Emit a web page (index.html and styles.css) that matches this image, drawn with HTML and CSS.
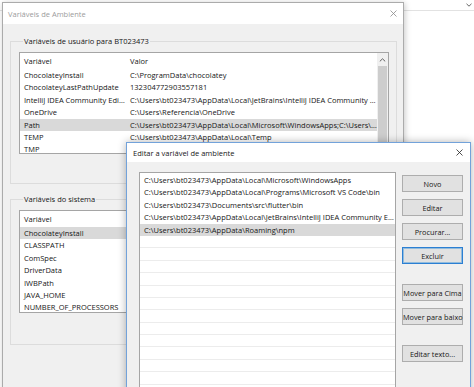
FILE: index.html
```html
<!DOCTYPE html>
<html lang="pt-BR">

<head>
    <meta charset="UTF-8">
    <title>Variáveis de Ambiente</title>
    <link rel="stylesheet" href="styles.css">
</head>

<body>
    <div class="desk-bar">
        <svg class="chev" width="6" height="4" viewBox="0 0 6 4"><path d="M0.5 0.8 L3 3.2 L5.5 0.8" fill="none" stroke="#555" stroke-width="0.9"/></svg>
    </div>

    <!-- janela de trás -->
    <div class="win win-back">
        <div class="titlebar">
            <span>Variáveis de Ambiente</span>
            <svg class="close" width="7" height="7" viewBox="0 0 7 7"><path d="M0.5 0.5 L6.5 6.5 M6.5 0.5 L0.5 6.5" stroke="#8a8a8a" stroke-width="0.8"/></svg>
        </div>

        <div class="group group-user">
            <div class="group-label">Variáveis de usuário para BT023473</div>
            <div class="listview">
                <div class="lv-main">
                    <div class="lv-row lv-head"><span>Variável</span><span>Valor</span></div>
                    <div class="lv-row"><span>ChocolateyInstall</span><span>C:\ProgramData\chocolatey</span></div>
                    <div class="lv-row"><span>ChocolateyLastPathUpdate</span><span>132304772903557181</span></div>
                    <div class="lv-row"><span>IntelliJ IDEA Community Edition</span><span>C:\Users\bt023473\AppData\Local\JetBrains\IntelliJ IDEA Community Edition 2020.1\bin;</span></div>
                    <div class="lv-row"><span>OneDrive</span><span>C:\Users\Referencia\OneDrive</span></div>
                    <div class="lv-row sel"><span>Path</span><span>C:\Users\bt023473\AppData\Local\Microsoft\WindowsApps;C:\Users\bt023473</span></div>
                    <div class="lv-row"><span>TEMP</span><span>C:\Users\bt023473\AppData\Local\Temp</span></div>
                    <div class="lv-row"><span>TMP</span><span>C:\Users\bt023473\AppData\Local\Temp</span></div>
                </div>
                <div class="scrollbar">
                    <div class="sb-arrow">
                        <svg width="7" height="4" viewBox="0 0 7 4"><path d="M0.8 3.4 L3.5 0.8 L6.2 3.4" fill="none" stroke="#606060" stroke-width="1"/></svg>
                    </div>
                    <div class="sb-thumb"></div>
                </div>
            </div>
        </div>

        <div class="group group-sys">
            <div class="group-label">Variáveis do sistema</div>
            <div class="listview">
                <div class="lv-main">
                    <div class="lv-row lv-head"><span>Variável</span><span>Valor</span></div>
                    <div class="lv-row sel"><span>ChocolateyInstall</span><span>C:\ProgramData\chocolatey</span></div>
                    <div class="lv-row"><span>CLASSPATH</span><span>.;</span></div>
                    <div class="lv-row"><span>ComSpec</span><span>C:\WINDOWS\system32\cmd.exe</span></div>
                    <div class="lv-row"><span>DriverData</span><span>C:\Windows\System32\Drivers\DriverData</span></div>
                    <div class="lv-row"><span>IWBPath</span><span>C:\Program Files\IWB</span></div>
                    <div class="lv-row"><span>JAVA_HOME</span><span>C:\Program Files\Java\jdk</span></div>
                    <div class="lv-row"><span>NUMBER_OF_PROCESSORS</span><span>4</span></div>
                </div>
            </div>
        </div>
    </div>

    <!-- janela da frente -->
    <div class="win win-front">
        <div class="titlebar">
            <span>Editar a variável de ambiente</span>
            <svg class="close" width="7" height="7" viewBox="0 0 7 7"><path d="M0.5 0.5 L6.5 6.5 M6.5 0.5 L0.5 6.5" stroke="#222" stroke-width="0.8"/></svg>
        </div>

        <div class="edit-body">
            <div class="path-list">
                <div class="path-row">C:\Users\bt023473\AppData\Local\Microsoft\WindowsApps</div>
                <div class="path-row">C:\Users\bt023473\AppData\Local\Programs\Microsoft VS Code\bin</div>
                <div class="path-row">C:\Users\bt023473\Documents\src\flutter\bin</div>
                <div class="path-row">C:\Users\bt023473\AppData\Local\JetBrains\IntelliJ IDEA Community Edition 2020.1\bin</div>
                <div class="path-row sel">C:\Users\bt023473\AppData\Roaming\npm</div>
                <div class="path-row empty"></div>
                <div class="path-row empty"></div>
                <div class="path-row empty"></div>
                <div class="path-row empty"></div>
                <div class="path-row empty"></div>
                <div class="path-row empty"></div>
                <div class="path-row empty"></div>
                <div class="path-row empty"></div>
                <div class="path-row empty"></div>
                <div class="path-row empty"></div>
                <div class="path-row empty"></div>
                <div class="path-row empty"></div>
                <div class="path-row empty"></div>
            </div>

            <div class="buttons">
                <button class="btn">Novo</button>
                <button class="btn">Editar</button>
                <button class="btn">Procurar...</button>
                <button class="btn btn-default">Excluir</button>
                <button class="btn sep">Mover para Cima</button>
                <button class="btn">Mover para baixo</button>
                <button class="btn sep">Editar texto...</button>
            </div>
        </div>
    </div>
</body>
</html>
```

FILE: styles.css
```css
* {
    box-sizing: border-box;
}
body {
    margin: 0;
    width: 474px;
    height: 387px;
    overflow: hidden;
    position: relative;
    background: #fff;
    font-family: "Open Sans", "Noto Sans", sans-serif;
    font-size: 7.5px;
    color: #161616;
}
.desk-bar {
    height: 11px;
    border-bottom: 1px solid #e2e2e2;
    display: flex;
    justify-content: flex-end;
    padding: 3px 2px 0 0;
}
.chev {
    display: block;
}
.win {
    position: absolute;
    display: flex;
    flex-direction: column;
    background: #f0f0f0;
}
.titlebar {
    display: flex;
    align-items: center;
    justify-content: space-between;
    background: #fff;
    flex: none;
}
.close {
    display: block;
}
.win-back {
    left: 2px;
    top: 2px;
    width: 402px;
    height: 400px;
    border: 1px solid #ababab;
    box-shadow: 1px 1px 6px rgba(0, 0, 0, 0.22);
}
.win-back .titlebar {
    height: 21px;
    padding: 0 6px 0 5px;
    color: #9c9c9c;
}
.win-front {
    left: 126px;
    top: 142px;
    width: 345px;
    height: 260px;
    border: 1px solid #72a2da;
    box-shadow: 0 0 8px rgba(0, 0, 0, 0.3);
}
.win-front .titlebar {
    height: 19px;
    padding: 0 7px 0 6px;
}

/* grupos */
.group {
    border: 1px solid #dcdcdc;
    margin: 17px 6px 0 7px;
    padding: 0 7px 29px 8px;
}
.group-sys {
    margin-top: 15px;
    padding-bottom: 31px;
}
.group-label {
    margin: -6px 0 0 4px;
    padding: 0 1px;
    line-height: 11px;
    width: max-content;
    background: #f0f0f0;
}
.listview {
    margin-top: 5px;
    height: 102px;
    border: 1px solid #a5a5a5;
    background: #fff;
    display: flex;
    overflow: hidden;
}
.group-sys .listview {
    height: 103px;
}
.lv-main {
    flex: 1;
    min-width: 0;
}
.lv-row {
    display: grid;
    grid-template-columns: 106px 1fr;
    height: 12.4px;
    line-height: 12.4px;
    white-space: nowrap;
}
.lv-row span {
    overflow: hidden;
    text-overflow: ellipsis;
    padding-left: 4px;
}
.lv-head {
    height: 16px;
    line-height: 16px;
}
.sel {
    background: #d9d9d9;
}
.scrollbar {
    width: 11px;
    flex: none;
    background: #f0f0f0;
    display: flex;
    flex-direction: column;
    align-items: center;
}
.sb-arrow {
    height: 13px;
    display: flex;
    align-items: center;
    justify-content: center;
}
.sb-thumb {
    width: 9px;
    height: 80px;
    background: #cdcdcd;
}

/* janela de edição */
.edit-body {
    flex: 1;
    display: flex;
    gap: 6px;
    padding: 10px 7px 0 12px;
}
.path-list {
    flex: 1;
    min-width: 0;
    border: 1px solid #a5a5a5;
    border-bottom: none;
    background: #fff;
    padding-top: 1px;
}
.path-row {
    height: 12.4px;
    line-height: 12.4px;
    padding-left: 4px;
    white-space: nowrap;
    overflow: hidden;
    text-overflow: ellipsis;
}
.path-row.empty {
    border-bottom: 1px solid #ececec;
}
.buttons {
    width: 61px;
    flex: none;
    display: flex;
    flex-direction: column;
    gap: 7px;
    margin-top: 3px;
}
.btn {
    height: 17px;
    padding: 0;
    border: 1px solid #adadad;
    background: #e1e1e1;
    font-family: inherit;
    font-size: 7.3px;
    color: #161616;
    white-space: nowrap;
}
.btn-default {
    border-color: #2b7fd3;
    box-shadow: inset 0 0 0 1px rgba(0, 120, 215, 0.35);
}
.btn.sep {
    margin-top: 13px;
}
```
